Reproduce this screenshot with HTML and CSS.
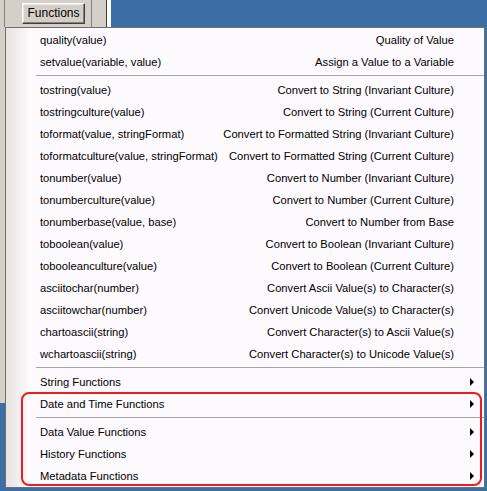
FILE: index.html
```html
<!DOCTYPE html>
<html lang="en">
<head>
    <meta charset="UTF-8">
    <meta name="viewport" content="width=device-width, initial-scale=1.0">
    <title>Functions</title>
    <link rel="stylesheet" href="styles.css">
</head>
<body>
    <header class="toolbar">
        <div class="tool-edge"></div>
        <div class="tool-panel">
            <button class="tool-button">Functions</button>
        </div>
        <div class="tool-split"></div>
        <div class="tool-gap"></div>
    </header>

    <div class="side-strip"></div>

    <!-- dropdown menu opened from the Functions button -->
    <div class="menu">
        <div class="menu-item"><span>quality(value)</span><span class="desc">Quality of Value</span></div>
        <div class="menu-item"><span>setvalue(variable, value)</span><span class="desc">Assign a Value to a Variable</span></div>
        <div class="menu-sep"></div>
        <div class="menu-item"><span>tostring(value)</span><span class="desc">Convert to String (Invariant Culture)</span></div>
        <div class="menu-item"><span>tostringculture(value)</span><span class="desc">Convert to String (Current Culture)</span></div>
        <div class="menu-item"><span>toformat(value, stringFormat)</span><span class="desc">Convert to Formatted String (Invariant Culture)</span></div>
        <div class="menu-item"><span>toformatculture(value, stringFormat)</span><span class="desc">Convert to Formatted String (Current Culture)</span></div>
        <div class="menu-item"><span>tonumber(value)</span><span class="desc">Convert to Number (Invariant Culture)</span></div>
        <div class="menu-item"><span>tonumberculture(value)</span><span class="desc">Convert to Number (Current Culture)</span></div>
        <div class="menu-item"><span>tonumberbase(value, base)</span><span class="desc">Convert to Number from Base</span></div>
        <div class="menu-item"><span>toboolean(value)</span><span class="desc">Convert to Boolean (Invariant Culture)</span></div>
        <div class="menu-item"><span>tobooleanculture(value)</span><span class="desc">Convert to Boolean (Current Culture)</span></div>
        <div class="menu-item"><span>asciitochar(number)</span><span class="desc">Convert Ascii Value(s) to Character(s)</span></div>
        <div class="menu-item"><span>asciitowchar(number)</span><span class="desc">Convert Unicode Value(s) to Character(s)</span></div>
        <div class="menu-item"><span>chartoascii(string)</span><span class="desc">Convert Character(s) to Ascii Value(s)</span></div>
        <div class="menu-item"><span>wchartoascii(string)</span><span class="desc">Convert Character(s) to Unicode Value(s)</span></div>
        <div class="menu-sep"></div>
        <div class="menu-item sub"><span>String Functions</span></div>
        <div class="menu-item sub"><span>Date and Time Functions</span></div>
        <div class="menu-sep"></div>
        <div class="menu-item sub"><span>Data Value Functions</span></div>
        <div class="menu-item sub"><span>History Functions</span></div>
        <div class="menu-item sub"><span>Metadata Functions</span></div>
    </div>

    <!-- red highlight drawn over the submenus -->
    <div class="highlight"></div>
</body>
</html>
```

FILE: styles.css
```css
:root {
    --face: #d4d0c8;
    --shadow: #808080;
    --dark: #404040;
    --desktop: #3a6ea5;
    --menu-bg: #fdfafd;
    --sep: #a6a6a6;
}

body {
    margin: 0;
    background: var(--desktop);
    font-family: "Liberation Sans", Arial, sans-serif;
    font-size: 11.2px;
    color: #000;
    overflow: hidden;
}

.toolbar {
    display: flex;
    height: 27px;
    background: var(--face);
}

.tool-edge {
    width: 4px;
    border-right: 1px solid var(--shadow);
}

.tool-panel {
    width: 86px;
    box-sizing: border-box;
    padding: 3px 0 0 17px;
}

.tool-button {
    width: 63px;
    height: 21px;
    padding: 0 0 1px;
    background: var(--face);
    font-family: inherit;
    font-size: 12px;
    color: #000;
    border: 1px solid;
    border-color: #fff var(--dark) var(--dark) #fff;
    box-shadow: inset -1px -1px 0 var(--shadow), inset 1px 1px 0 #ece9e4;
}

.tool-split {
    width: 14px;
    border-left: 1px solid var(--shadow);
    border-right: 1px solid var(--dark);
}

.tool-gap {
    width: 4px;
    background: #fff;
}

.tool-gap ~ * {
    flex: 1;
}

.side-strip {
    width: 5px;
    height: 376px;
    background: var(--face);
}

.toolbar::after {
    content: '';
    flex: 1;
    background: var(--desktop);
}

.menu {
    position: absolute;
    left: 5px;
    top: 27px;
    width: 478px;
    padding-top: 1px;
    background: var(--menu-bg);
    border: 1px solid #6e6e6e;
    background-image: linear-gradient(to right, #e6e3e0, #fdfbfb 24px, var(--menu-bg) 24px);
}

.menu-item {
    display: flex;
    justify-content: space-between;
    align-items: center;
    height: 22px;
    padding: 0 30px 0 34px;
    white-space: nowrap;
    position: relative;
}

.menu-item.sub::after {
    content: '';
    position: absolute;
    right: 10px;
    top: 7px;
    border-left: 4px solid #000;
    border-top: 4px solid transparent;
    border-bottom: 4px solid transparent;
}

.menu-sep {
    height: 6px;
    margin-left: 30px;
    background: linear-gradient(var(--sep), var(--sep)) 0 2px / 100% 1px no-repeat;
}

.highlight {
    position: absolute;
    left: 21px;
    top: 392px;
    width: 457px;
    height: 90px;
    border: 2px solid #ec1c24;
    border-radius: 8px;
}
```
